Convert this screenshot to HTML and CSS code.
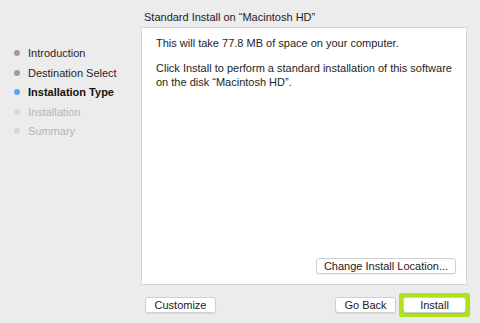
FILE: index.html
```html
<!DOCTYPE html>
<html>
<head>
<meta charset="utf-8">
<link rel="stylesheet" href="styles.css">
</head>
<body>
<div class="window">
  <nav class="sidebar">
    <div class="step done"><span class="dot"></span>Introduction</div>
    <div class="step done"><span class="dot"></span>Destination Select</div>
    <div class="step current"><span class="dot"></span>Installation Type</div>
    <div class="step todo"><span class="dot"></span>Installation</div>
    <div class="step todo"><span class="dot"></span>Summary</div>
  </nav>
  <main class="main">
    <div class="title">Standard Install on “Macintosh HD”</div>
    <div class="panel">
      <p class="msg">This will take 77.8 MB of space on your computer.</p>
      <p class="msg">Click Install to perform a standard installation of this software on the disk “Macintosh HD”.</p>
      <div class="panel-foot">
        <button class="btn btn-loc">Change Install Location...</button>
      </div>
    </div>
    <div class="actions">
      <button class="btn btn-custom">Customize</button>
      <div class="right">
        <button class="btn btn-back">Go Back</button>
        <span class="highlight"><button class="btn btn-install">Install</button></span>
      </div>
    </div>
  </main>
</div>
</body>
</html>
```
FILE: styles.css
```css
* { box-sizing: border-box; }
html, body {
  margin: 0;
  padding: 0;
  background: #ececec;
  width: 480px;
  height: 323px;
  overflow: hidden;
  font-family: "Liberation Sans", Arial, sans-serif;
  color: #222;
}
.window {
  display: flex;
  height: 323px;
}
.sidebar {
  width: 141px;
  padding-top: 45px;
  padding-left: 14px;
  display: flex;
  flex-direction: column;
  gap: 3.5px;
}
.step {
  display: flex;
  align-items: center;
  height: 16px;
  font-size: 11px;
  color: #262626;
}
.dot {
  width: 6px;
  height: 6px;
  border-radius: 50%;
  margin-right: 8px;
  background: #9d9d9d;
}
.step.current { font-weight: bold; color: #111; }
.step.current .dot { background: #5aa7ee; }
.step.todo { color: #b4b4b4; }
.step.todo .dot { background: #d8d8d8; }
.main {
  width: 326px;
  display: flex;
  flex-direction: column;
}
.title {
  font-size: 11px;
  padding-left: 3px;
  height: 27px;
  padding-top: 11px;
  color: #222;
}
.panel {
  height: 258px;
  background: #fff;
  border: 1px solid #d6d6d6;
  padding: 8px 14px 10px 14px;
  display: flex;
  flex-direction: column;
}
.msg {
  margin: 0 0 11px 0;
  font-size: 11px;
  line-height: 14px;
  color: #1e1e1e;
}
.panel-foot {
  margin-top: auto;
  display: flex;
  justify-content: flex-end;
}
.btn {
  font-family: "Liberation Sans", Arial, sans-serif;
  font-size: 11px;
  color: #222;
  background: #fff;
  border: 1px solid #cfcfcf;
  border-radius: 3px;
  height: 16px;
  padding: 0;
  line-height: 14px;
  box-shadow: 0 1px 1px rgba(0,0,0,0.08);
}
.btn-loc { width: 140px; margin-right: -4px; }
.actions {
  display: flex;
  justify-content: space-between;
  align-items: center;
  padding-top: 8px;
  padding-left: 4px;
}
.btn-custom { width: 71px; }
.right {
  display: flex;
  align-items: center;
  gap: 3px;
  margin-right: -3px;
}
.btn-back { width: 61px; }
.highlight {
  display: flex;
  padding: 4px;
  background: #aee21c;
  border-radius: 2px;
}
.btn-install { width: 63px; }
```
